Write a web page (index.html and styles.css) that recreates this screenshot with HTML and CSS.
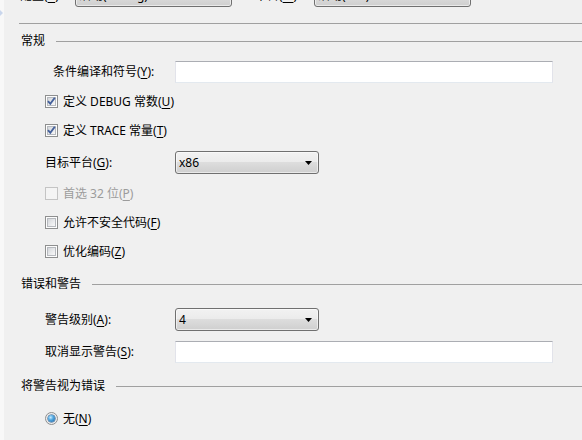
FILE: index.html
```html
<!DOCTYPE html>
<html lang="zh-CN">
<head>
<meta charset="utf-8">
<title>生成</title>
<link rel="stylesheet" href="styles.css">
</head>
<body>
<div class="page">
  <div class="strip"><div class="strip-mark"></div></div>
  <div class="content">
    <div class="topbar">
      <span class="top-label">配置(<u>C</u>):</span>
      <div class="combo top-combo"><span class="combo-text">活动(Debug)</span><svg class="arrow" width="7" height="4" viewBox="0 0 7 4"><polygon points="0,0 7,0 3.5,4" fill="#000"/></svg></div>
      <span class="top-label second">平台(<u>M</u>):</span>
      <div class="combo top-combo"><span class="combo-text">活动(x86)</span><svg class="arrow" width="7" height="4" viewBox="0 0 7 4"><polygon points="0,0 7,0 3.5,4" fill="#000"/></svg></div>
    </div>
    <div class="separator"></div>

    <div class="section-head head-first"><span class="head-text">常规</span><div class="rule"></div></div>

    <div class="row field-row">
      <span class="lbl lbl-indent">条件编译和符号(<u>Y</u>):</span>
      <div class="textbox"></div>
    </div>

    <div class="row check-row first-check">
      <span class="cb"><span class="cb-inner"><svg class="tick" width="11" height="11" viewBox="0 0 11 11"><path d="M2 5.2 L4.3 7.8 L8.8 1.8" fill="none" stroke="#44609b" stroke-width="1.9"/></svg></span></span>
      <span class="cb-text">定义 DEBUG 常数(<u>U</u>)</span>
    </div>

    <div class="row check-row">
      <span class="cb"><span class="cb-inner"><svg class="tick" width="11" height="11" viewBox="0 0 11 11"><path d="M2 5.2 L4.3 7.8 L8.8 1.8" fill="none" stroke="#44609b" stroke-width="1.9"/></svg></span></span>
      <span class="cb-text">定义 TRACE 常量(<u>T</u>)</span>
    </div>

    <div class="row combo-row">
      <span class="lbl">目标平台(<u>G</u>):</span>
      <div class="combo main-combo"><span class="combo-text">x86</span><svg class="arrow" width="7" height="4" viewBox="0 0 7 4"><polygon points="0,0 7,0 3.5,4" fill="#000"/></svg></div>
    </div>

    <div class="row check-row">
      <span class="cb disabled"></span>
      <span class="cb-text muted">首选 32 位(<u>P</u>)</span>
    </div>

    <div class="row check-row">
      <span class="cb"><span class="cb-inner"></span></span>
      <span class="cb-text">允许不安全代码(<u>F</u>)</span>
    </div>

    <div class="row check-row">
      <span class="cb"><span class="cb-inner"></span></span>
      <span class="cb-text">优化编码(<u>Z</u>)</span>
    </div>

    <div class="section-head"><span class="head-text">错误和警告</span><div class="rule"></div></div>

    <div class="row combo-row combo-after-head">
      <span class="lbl">警告级别(<u>A</u>):</span>
      <div class="combo main-combo"><span class="combo-text">4</span><svg class="arrow" width="7" height="4" viewBox="0 0 7 4"><polygon points="0,0 7,0 3.5,4" fill="#000"/></svg></div>
    </div>

    <div class="row field-row field-tight">
      <span class="lbl">取消显示警告(<u>S</u>):</span>
      <div class="textbox"></div>
    </div>

    <div class="section-head"><span class="head-text">将警告视为错误</span><div class="rule"></div></div>

    <div class="row check-row radio-row">
      <span class="radio"><span class="radio-dot"></span></span>
      <span class="cb-text">无(<u>N</u>)</span>
    </div>
  </div>
</div>
</body>
</html>
```

FILE: styles.css
```css
html, body {
  margin: 0;
  padding: 0;
  overflow: hidden;
}
body {
  background: #f0f0f0;
  font-family: "Noto Sans", "Noto Sans CJK SC", sans-serif;
  font-size: 12px;
  line-height: 16px;
  color: #000;
}
u {
  text-decoration-thickness: 1px;
  text-underline-offset: 2px;
}
.page {
  display: flex;
  width: 582px;
  height: 440px;
}
.strip {
  width: 4px;
  flex: none;
  background: #f8f8f8;
}
.strip-mark {
  margin-top: 10px;
  width: 0;
  height: 0;
  border-top: 3px solid transparent;
  border-bottom: 3px solid transparent;
  border-left: 3px solid #c9d6ec;
}
.content {
  flex: 1;
  padding-left: 15px;
  display: flex;
  flex-direction: column;
}

/* top clipped bar */
.topbar {
  margin-top: -16px;
  height: 23px;
  display: flex;
  align-items: center;
  flex: none;
}
.top-label {
  width: 56px;
  padding-left: 1px;
  box-sizing: border-box;
}
.top-label.second {
  margin-left: 22px;
  width: 60px;
}
.top-combo {
  width: 157px;
}
.separator {
  margin-top: 16px;
  height: 0;
  border-top: 1px solid #a0a0a0;
  flex: none;
}

/* section headings */
.section-head {
  margin-top: 14px;
  height: 18px;
  display: flex;
  align-items: center;
  flex: none;
}
.head-first {
  margin-top: 8px;
}
.head-text {
  padding-left: 2px;
  white-space: nowrap;
}
.rule {
  flex: 1;
  margin-left: 11px;
  height: 0;
  border-top: 1px solid #a0a0a0;
}

/* rows */
.row {
  display: flex;
  align-items: center;
  flex: none;
  padding-left: 26px;
}
.field-row {
  height: 22px;
  margin-top: 11px;
}
.field-tight {
  margin-top: 10px;
}
.combo-row {
  height: 23px;
  margin-top: 11px;
}
.combo-after-head {
  margin-top: 15px;
}
.check-row {
  height: 19px;
  margin-top: 10px;
}
.first-check {
  margin-top: 9px;
}
.radio-row {
  margin-top: 14px;
}
.lbl {
  width: 130px;
  flex: none;
  white-space: nowrap;
}
.lbl-indent {
  width: 122px;
  padding-left: 8px;
}

/* textbox */
.textbox {
  width: 378px;
  height: 22px;
  box-sizing: border-box;
  background: #fff;
  border: 1px solid #e2e3ea;
  border-top-color: #abadb3;
  border-bottom-color: #e3e9ef;
}

/* combo */
.combo {
  height: 23px;
  box-sizing: border-box;
  border: 1px solid #707070;
  border-radius: 3px;
  background: linear-gradient(#f2f2f2 0%, #ebebeb 50%, #dddddd 50%, #cfcfcf 100%);
  display: flex;
  align-items: center;
  padding: 0 6px 0 3px;
  box-shadow: inset 0 0 0 1px rgba(255, 255, 255, 0.55);
}
.main-combo {
  width: 144px;
}
.combo-text {
  flex: 1;
  white-space: nowrap;
  overflow: hidden;
}
.arrow {
  flex: none;
  display: block;
}

/* checkbox */
.cb {
  width: 13px;
  height: 13px;
  box-sizing: border-box;
  border: 1px solid #8e8f8f;
  background: #fdfdfd;
  padding: 1px;
  flex: none;
  margin-right: 5px;
}
.cb-inner {
  display: block;
  width: 9px;
  height: 9px;
  box-sizing: border-box;
  border: 1px solid #b6b9be;
  background: linear-gradient(135deg, #d3d6da 0%, #e9eaec 55%, #f8f8f8 100%);
  position: relative;
}
.tick {
  position: absolute;
  left: -2px;
  top: -2px;
}
.cb.disabled {
  border-color: #c4c4c4;
  background: #f4f4f4;
}
.cb-text {
  white-space: nowrap;
}
.muted {
  color: #9c9c9c;
}

/* radio */
.radio {
  width: 13px;
  height: 13px;
  box-sizing: border-box;
  border-radius: 50%;
  border: 1px solid #8e8f8f;
  background: radial-gradient(circle at 50% 50%, #ffffff 0%, #e4e4e4 100%);
  display: flex;
  align-items: center;
  justify-content: center;
  flex: none;
  margin-right: 5px;
}
.radio-dot {
  width: 7px;
  height: 7px;
  border-radius: 50%;
  background: radial-gradient(circle at 38% 35%, #c9ecff 0%, #52a8e0 40%, #1d5f9e 100%);
  box-shadow: 0 0 0 0.5px #1f4f80;
}
```
